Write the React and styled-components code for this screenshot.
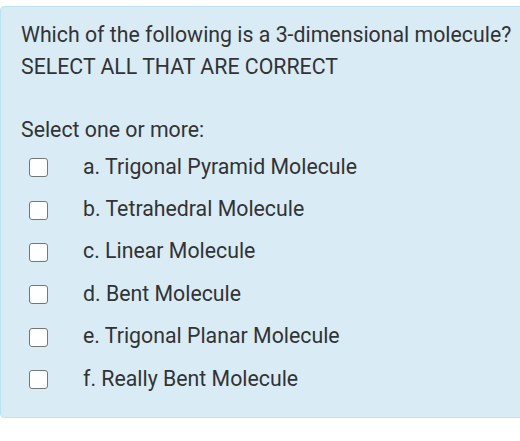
import React from "react";
import styled, { createGlobalStyle } from "styled-components";

const Global = createGlobalStyle`
  html, body { margin: 0; padding: 0; background: #fff; }
  body { font-family: Roboto, "Noto Sans", sans-serif; color: #333; }
`;

const Page = styled.div`
  padding-top: 6px;
  width: 520px;
  overflow: hidden;
`;

const Panel = styled.div`
  width: 540px;
  box-sizing: border-box;
  background: #d9ecf6;
  border: 1px solid #bce4f0;
  border-radius: 4px;
  padding: 12px 0 18px 20px;
`;

const QText = styled.div`
  font-size: 21.3px;
  line-height: 32px;
  color: #333;
`;

const Prompt = styled.div`
  margin-top: 31px;
  font-size: 21.3px;
  line-height: 32px;
`;

const Options = styled.div`
  display: flex;
  flex-direction: column;
  margin-top: -1px;
`;

const Option = styled.label`
  display: flex;
  align-items: center;
  height: 42.4px;
  padding-left: 8px;
`;

const Box = styled.span`
  width: 17px;
  height: 17px;
  margin-top: 3px;
  border: 1px solid #767676;
  border-radius: 3px;
  background: #fff;
  flex: none;
`;

const Label = styled.span`
  margin-left: 35px;
  font-size: 21.3px;
`;

const options = [
  "a. Trigonal Pyramid Molecule",
  "b. Tetrahedral Molecule",
  "c. Linear Molecule",
  "d. Bent Molecule",
  "e. Trigonal Planar Molecule",
  "f. Really Bent Molecule",
];

export default function App() {
  return (
    <Page>
      <Global />
      <Panel>
        <QText>
          Which of the following is a 3-dimensional molecule?
          <br />
          SELECT ALL THAT ARE CORRECT
        </QText>
        <Prompt>Select one or more:</Prompt>
        <Options>
          {options.map((o) => (
            <Option key={o}>
              <Box />
              <Label>{o}</Label>
            </Option>
          ))}
        </Options>
      </Panel>
    </Page>
  );
}
